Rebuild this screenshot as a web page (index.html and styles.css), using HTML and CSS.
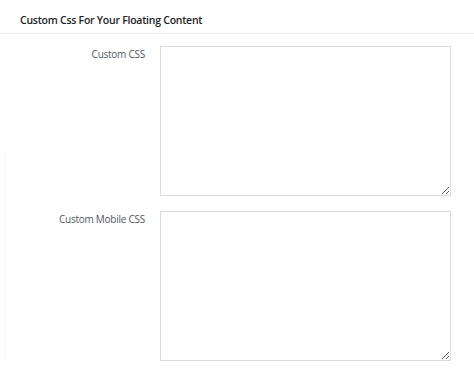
FILE: index.html
```html
<!DOCTYPE html>
<html>
<head>
<meta charset="utf-8">
<link rel="stylesheet" href="styles.css">
</head>
<body>
<div class="panel">
  <h2 class="panel-title">Custom Css For Your Floating Content</h2>
  <div class="panel-body">
    <div class="side-rule"></div>
    <div class="form">
      <div class="row">
        <label class="label">Custom CSS</label>
        <textarea class="field"></textarea>
      </div>
      <div class="row">
        <label class="label">Custom Mobile CSS</label>
        <textarea class="field"></textarea>
      </div>
    </div>
  </div>
</div>
</body>
</html>
```
FILE: styles.css
```css
html, body {
  margin: 0;
  padding: 0;
  background: #ffffff;
  font-family: "Open Sans", "Noto Sans", sans-serif;
  color: #3c434a;
}
.panel {
  width: 474px;
}
.panel-title {
  margin: 0;
  padding: 14px 20px 7px;
  font-size: 10.5px;
  line-height: 12px;
  letter-spacing: -0.25px;
  font-weight: 600;
  color: #1d2327;
  border-bottom: 1px solid #f0f0f1;
}
.panel-body {
  position: relative;
}
.side-rule {
  position: absolute;
  left: 4px;
  top: 118px;
  bottom: -40px;
  width: 1px;
  background: #f9f9f9;
}
.form {
  display: flex;
  flex-direction: column;
  gap: 15px;
  padding-top: 12px;
}
.row {
  display: flex;
  align-items: flex-start;
}
.label {
  width: 145px;
  text-align: right;
  font-size: 10px;
  line-height: 14px;
  letter-spacing: -0.25px;
  padding-top: 1px;
  color: #50575e;
  flex-shrink: 0;
}
.field {
  margin: 0 0 0 15px;
  width: 291px;
  height: 150px;
  box-sizing: border-box;
  border: 1px solid #dcdcde;
  border-radius: 0;
  background: #fff;
  padding: 4px;
  resize: both;
  font-family: inherit;
}
```
